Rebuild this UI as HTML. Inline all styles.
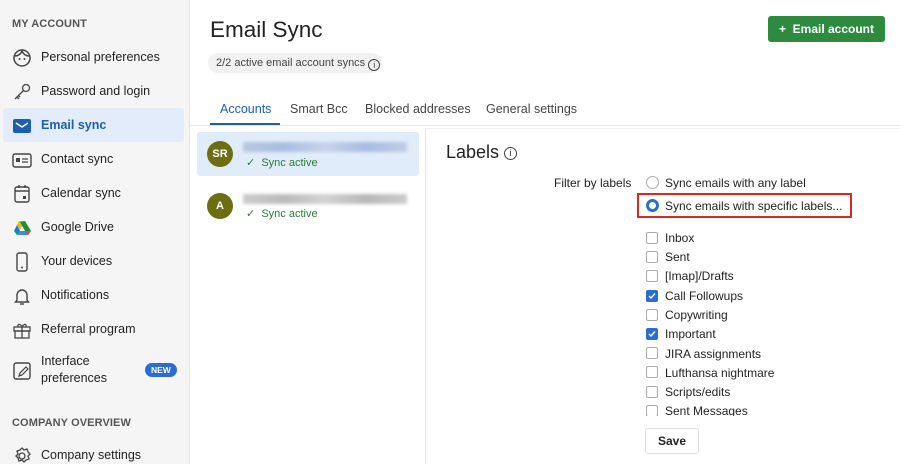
<!DOCTYPE html>
<html><head><meta charset="utf-8"><style>
*{margin:0;padding:0;box-sizing:border-box}
body{width:900px;height:464px;overflow:hidden;font-family:"Liberation Sans",sans-serif;background:#fff;position:relative;color:#222}
.sb{position:absolute;left:0;top:0;width:190px;height:464px;background:#f5f5f6;border-right:1px solid #e4e4e4}
.h{position:absolute;left:12px;font-size:11px;color:#555;font-weight:bold;letter-spacing:.1px}
.it{position:absolute;left:3px;width:181px;height:34px;display:flex;align-items:center;font-size:12.5px;color:#222}
.it svg{position:absolute;left:9px;top:8px}
.it span{position:absolute;left:38px}
.act{background:#e2ecfa;border-radius:3px;color:#1b5fb0;font-weight:bold}
.a{position:absolute}
.tab{position:absolute;top:102px;font-size:12.5px;color:#444}
.av{position:absolute;width:26px;height:26px;border-radius:50%;background:#6b6e12;color:#fff;font-size:11px;font-weight:bold;display:flex;align-items:center;justify-content:center}
.sa{position:absolute;font-size:11px;color:#2d7a3a}
.blur{position:absolute;height:10px;background:linear-gradient(90deg,#b9c7e0,#a9bde2,#c8d3e8,#a7bce4,#bfcbe3);filter:blur(1.5px)}
.cb{position:absolute;left:646px;width:12px;height:12px;border:1px solid #aaa;border-radius:2px;background:#fff}
.cb svg{position:absolute;left:0;top:0}
.cb.on{background:#2b6dd0;border-color:#2b6dd0}
.lb{position:absolute;left:665px;font-size:12px;color:#222}
</style></head><body>
<div class="sb">
<div class="h" style="top:18px">MY ACCOUNT</div>
<div class="it" style="top:40px"><svg width="20" height="20" viewBox="0 0 20 20"><circle cx="10" cy="10" r="8" fill="none" stroke="#444" stroke-width="1.5"/><path d="M3 8c3 0 6-2 7-5 1 3 4 5 7 5" fill="none" stroke="#444" stroke-width="1.5"/><circle cx="7.5" cy="11" r="1" fill="#444"/><circle cx="12.5" cy="11" r="1" fill="#444"/></svg><span>Personal preferences</span></div>
<div class="it" style="top:74px"><svg width="20" height="20" viewBox="0 0 20 20"><circle cx="14" cy="6" r="3.5" fill="none" stroke="#444" stroke-width="1.3"/><path d="M11.5 8.5L3 17M5 15l2 2M6.5 13.5l1.5 1.5" stroke="#444" stroke-width="1.3" fill="none"/></svg><span>Password and login</span></div>
<div class="it act" style="top:108px"><svg width="20" height="20" viewBox="0 0 20 20"><rect x="1" y="3" width="18" height="14" rx="2" fill="#1b5fb0"/><path d="M4 7l6 4 6-4" stroke="#fff" stroke-width="1.5" fill="none"/></svg><span>Email sync</span></div>
<div class="it" style="top:142px"><svg width="20" height="20" viewBox="0 0 20 20"><rect x="1" y="4" width="18" height="13" rx="2" fill="none" stroke="#444" stroke-width="1.4"/><rect x="4" y="8" width="4" height="4" fill="#444"/><path d="M10 9h6M10 12h6" stroke="#444" stroke-width="1.3"/></svg><span>Contact sync</span></div>
<div class="it" style="top:176px"><svg width="20" height="20" viewBox="0 0 20 20"><rect x="3" y="3" width="14" height="15" rx="2" fill="none" stroke="#444" stroke-width="1.4"/><path d="M3 7h14M7 1v3M13 1v3" stroke="#444" stroke-width="1.4"/><rect x="11" y="12" width="3" height="3" fill="#444"/></svg><span>Calendar sync</span></div>
<div class="it" style="top:210px"><svg width="20" height="20" viewBox="0 0 20 20"><path d="M7 3h6l-5 9-3-5z" fill="#f6b700"/><path d="M13 3l6 10h-6l-5-9z" fill="#1e8e3e"/><path d="M2 13l3-6 3 6z" fill="#1a73e8"/><path d="M5 17l3-4h11l-3 4z" fill="#4285f4"/><path d="M2 13h6l-3 4z" fill="#0f9d58"/><path d="M13 13h6l-3 4z" fill="#ea4335"/></svg><span>Google Drive</span></div>
<div class="it" style="top:244px"><svg width="20" height="20" viewBox="0 0 20 20"><rect x="5" y="1" width="10" height="18" rx="2" fill="none" stroke="#444" stroke-width="1.4"/><circle cx="10" cy="15.5" r="1" fill="#444"/></svg><span>Your devices</span></div>
<div class="it" style="top:278px"><svg width="20" height="20" viewBox="0 0 20 20"><path d="M5 14V9a5 5 0 0110 0v5l1.5 2h-13z" fill="none" stroke="#444" stroke-width="1.4"/><path d="M8 18h4" stroke="#444" stroke-width="1.4"/></svg><span>Notifications</span></div>
<div class="it" style="top:312px"><svg width="20" height="20" viewBox="0 0 20 20"><rect x="2" y="7" width="16" height="4" fill="none" stroke="#444" stroke-width="1.3"/><rect x="3" y="11" width="14" height="7" fill="none" stroke="#444" stroke-width="1.3"/><path d="M10 7v11M10 7C8 3 5 4 6 7M10 7c2-4 5-3 4 0" fill="none" stroke="#444" stroke-width="1.3"/></svg><span>Referral program</span></div>
<div class="it" style="top:352px;height:36px"><svg width="20" height="20" viewBox="0 0 20 20" style="top:9px"><rect x="2" y="2" width="16" height="16" rx="2" fill="none" stroke="#444" stroke-width="1.4"/><path d="M7 15l1-3 6-6 2 2-6 6z" fill="none" stroke="#444" stroke-width="1.2"/></svg><span style="line-height:17px;top:1px">Interface<br>preferences</span><div style="position:absolute;left:142px;top:11px;background:#2b6dd0;color:#fff;font-size:8.5px;font-weight:bold;padding:2px 6px;border-radius:8px">NEW</div></div>
<div class="h" style="top:417px">COMPANY OVERVIEW</div>
<div class="it" style="top:438px"><svg width="20" height="20" viewBox="0 0 20 20"><circle cx="10" cy="10" r="3" fill="none" stroke="#444" stroke-width="1.3"/><path d="M10 2l2 2 3-1 1 3 2 2-2 2 1 3-3 1-2 2-2-2-3 1-1-3-2-2 2-2-1-3 3-1z" fill="none" stroke="#444" stroke-width="1.3"/></svg><span>Company settings</span></div>
</div>

<div class="a" style="left:210px;top:17px;font-size:22.5px;color:#222">Email Sync</div>
<div class="a" style="left:208px;top:53px;width:174px;height:20px;background:#f1f1f1;border-radius:10px;font-size:11px;color:#444;padding:4px 0 0 8px">2/2 active email account syncs <span style="display:inline-block;width:12px;height:12px;border:1px solid #444;border-radius:50%;font-size:9px;text-align:center;line-height:10px;vertical-align:-2px">i</span></div>
<div class="a" style="left:768px;top:16px;width:117px;height:26px;background:#2d8a3e;border-radius:3px;color:#fff;font-size:12px;font-weight:bold;text-align:center;line-height:26px">+&nbsp; Email account</div>
<div class="tab" style="left:220px;color:#1b5fb0">Accounts</div>
<div class="tab" style="left:290px">Smart Bcc</div>
<div class="tab" style="left:365px">Blocked addresses</div>
<div class="tab" style="left:486px">General settings</div>
<div class="a" style="left:210px;top:123px;width:70px;height:2px;background:#1b5fb0"></div>
<div class="a" style="left:190px;top:125px;width:710px;height:1px;background:#e6e6e6"></div>
<div class="a" style="left:425px;top:128px;width:1px;height:336px;background:#e6e6e6"></div>
<div class="a" style="left:425px;top:128px;width:475px;height:1px;background:#eee"></div>
<div class="a" style="left:197px;top:132px;width:222px;height:44px;background:#e1ecfb;border-radius:3px"></div>
<div class="av" style="left:207px;top:141px">SR</div>
<div class="blur" style="left:243px;top:142px;width:164px"></div>
<div class="sa" style="left:246px;top:156px">✓&nbsp; Sync active</div>
<div class="av" style="left:207px;top:193px">A</div>
<div class="blur" style="left:243px;top:194px;width:164px;background:linear-gradient(90deg,#ccc,#bbb,#d3d3d3,#b8b8b8,#ccc)"></div>
<div class="sa" style="left:246px;top:207px">✓&nbsp; Sync active</div>

<div class="a" style="left:446px;top:142px;font-size:18px;color:#222">Labels <span style="display:inline-block;width:13px;height:13px;border:1px solid #444;border-radius:50%;font-size:9px;text-align:center;line-height:11px;vertical-align:2px">i</span></div>
<div class="a" style="left:554px;top:176px;font-size:12px">Filter by labels</div>
<div class="a" style="left:646px;top:176px;width:13px;height:13px;border:1px solid #aaa;border-radius:50%"></div>
<div class="a" style="left:665px;top:176px;font-size:12px">Sync emails with any label</div>
<div class="a" style="left:637px;top:193px;width:215px;height:25px;border:2px solid #d42a2a"></div>
<div class="a" style="left:646px;top:199px;width:13px;height:13px;border:3.5px solid #2b6dd0;border-radius:50%"></div>
<div class="a" style="left:665px;top:199px;font-size:12px">Sync emails with specific labels...</div>
<div class="cb" style="top:232px"></div><div class="lb" style="top:231px">Inbox</div>
<div class="cb" style="top:251px"></div><div class="lb" style="top:250px">Sent</div>
<div class="cb" style="top:270px"></div><div class="lb" style="top:269px">[Imap]/Drafts</div>
<div class="cb on" style="top:290px"><svg width="10" height="10" viewBox="0 0 10 10"><path d="M2 5l2 2 4-4.5" stroke="#fff" stroke-width="1.4" fill="none"/></svg></div><div class="lb" style="top:289px">Call Followups</div>
<div class="cb" style="top:309px"></div><div class="lb" style="top:308px">Copywriting</div>
<div class="cb on" style="top:328px"><svg width="10" height="10" viewBox="0 0 10 10"><path d="M2 5l2 2 4-4.5" stroke="#fff" stroke-width="1.4" fill="none"/></svg></div><div class="lb" style="top:327px">Important</div>
<div class="cb" style="top:347px"></div><div class="lb" style="top:347px">JIRA assignments</div>
<div class="cb" style="top:366px"></div><div class="lb" style="top:366px">Lufthansa nightmare</div>
<div class="cb" style="top:386px"></div><div class="lb" style="top:385px">Scripts/edits</div>
<div class="a" style="left:640px;top:403px;width:220px;height:13px;overflow:hidden"><div class="cb" style="left:6px;top:2px"></div><div class="lb" style="left:25px;top:1px">Sent Messages</div></div>
<div class="a" style="left:645px;top:428px;width:54px;height:26px;border:1px solid #ddd;border-radius:3px;font-size:12px;font-weight:bold;text-align:center;line-height:24px">Save</div>
</body></html>
